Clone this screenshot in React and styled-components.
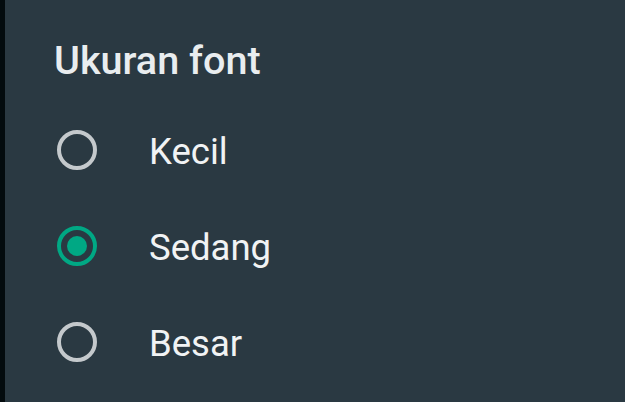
import React, { useState } from "react";
import styled, { createGlobalStyle } from "styled-components";

const GlobalStyle = createGlobalStyle`
  html, body {
    margin: 0;
    padding: 0;
    background: #2a3942;
  }
  body {
    font-family: Roboto, "Noto Sans", sans-serif;
  }
`;

const Screen = styled.div`
  display: flex;
  width: 625px;
  height: 402px;
  overflow: hidden;
  background: #2a3942;
`;

const EdgeStrip = styled.div`
  width: 5px;
  flex-shrink: 0;
  background: #030b0e;
`;

const Dialog = styled.div`
  flex: 1;
  display: flex;
  flex-direction: column;
  padding: 39px 0 0 49px;
`;

const Title = styled.h2`
  margin: 0 0 19px;
  font-size: 39.6px;
  line-height: 44px;
  font-weight: 500;
  color: #e9edef;
`;

const Option = styled.label`
  display: flex;
  align-items: center;
  height: 96px;
  cursor: pointer;
`;

const Radio = styled.span`
  box-sizing: border-box;
  width: 40px;
  height: 40px;
  margin-left: 3px;
  border-radius: 50%;
  border: 4px solid ${(p) => (p.checked ? "#00a884" : "#c4c9cc")};
  display: flex;
  align-items: center;
  justify-content: center;

  &::after {
    content: "";
    width: 20px;
    height: 20px;
    border-radius: 50%;
    background: #00a884;
    display: ${(p) => (p.checked ? "block" : "none")};
  }
`;

const OptionLabel = styled.span`
  margin-left: 52px;
  font-size: 36.5px;
  color: #f1f3f4;
  transform: translateY(1px);
`;

const sizes = ["Kecil", "Sedang", "Besar"];

export default function App() {
  const [selected, setSelected] = useState("Sedang");

  return (
    <>
      <GlobalStyle />
      <Screen>
        <EdgeStrip />
        <Dialog>
          <Title>Ukuran font</Title>
          {sizes.map((size) => (
            <Option key={size} onClick={() => setSelected(size)}>
              <Radio checked={selected === size} />
              <OptionLabel>{size}</OptionLabel>
            </Option>
          ))}
        </Dialog>
      </Screen>
    </>
  );
}
